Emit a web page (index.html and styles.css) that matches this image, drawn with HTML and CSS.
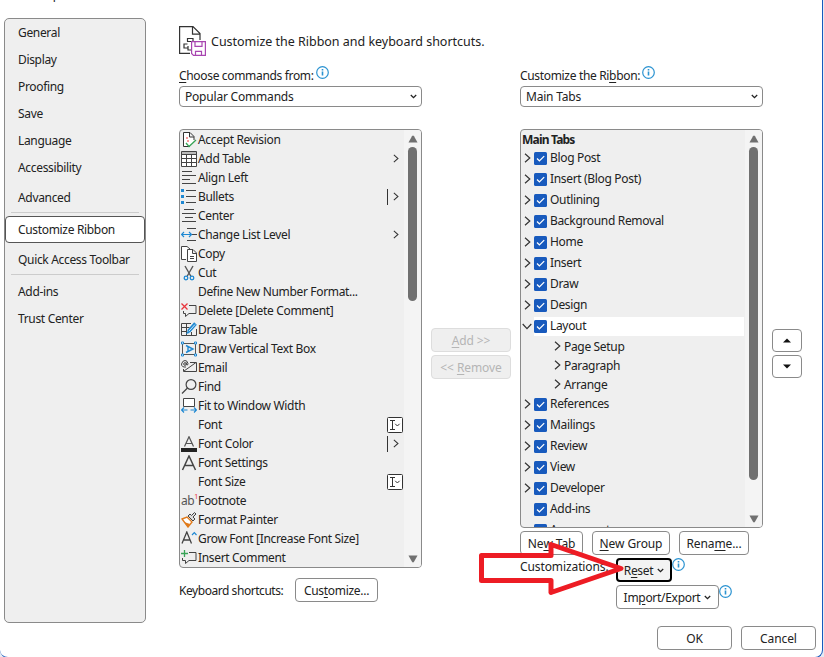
FILE: index.html
```html
<!DOCTYPE html>
<html lang="en">
<head>
  <meta charset="UTF-8">
  <meta name="viewport" content="width=device-width, initial-scale=1.0">
  <title>Options</title>
  <link rel="stylesheet" href="styles.css">
</head>
<body>
<!--SHARED ICONS-->
  <svg class="defs">
    <symbol id="check" viewBox="0 0 13 13"><rect width="13" height="13" rx="1.5" fill="#185abd"/><path d="M3 6.5l2.4 2.4 4.8-4.8" fill="none" stroke="#fff" stroke-width="1.3"/></symbol>
    <symbol id="right" viewBox="0 0 7 10"><path d="M1 .7l4.8 4.3L1 9.3" fill="none" stroke="#333" stroke-width="1.2"/></symbol>
    <symbol id="down" viewBox="0 0 10 7"><path d="M.7 1L5 5.6 9.3 1" fill="none" stroke="#333" stroke-width="1.2"/></symbol>
    <symbol id="caret" viewBox="0 0 7 5"><path d="M.8 1l2.7 2.6L6.2 1" fill="none" stroke="#222" stroke-width="1.3"/></symbol>
    <symbol id="info" viewBox="0 0 13 13"><circle cx="6.5" cy="6.5" r="5.8" fill="none" stroke="#2b93d1" stroke-width="1.2"/><path d="M6.5 3v1.4M6.5 5.4v4.2" stroke="#2b93d1" stroke-width="1.6"/></symbol>
    <symbol id="tri" viewBox="0 0 10 8"><path d="M.5 7.500L4 1.200q1-1.200 2 0l3.500 6.300z" fill="#707070"/></symbol>
    <symbol id="edit" viewBox="0 0 16 16"><rect x=".5" y=".5" width="15" height="15" rx="1" fill="#fff" stroke="#333"/><path d="M3 3.5h5M3 12.5h5M5.5 3.5v9M8.2 6.8l2.2 2.2 2.2-2.2" fill="none" stroke="#333"/></symbol>
  </svg>

  <div class="dialog">
    <span class="title">Word Options</span>
    <div class="content">
<!--SIDEBAR-->
      <nav class="sidebar">
        <a>General</a>
        <a>Display</a>
        <a>Proofing</a>
        <a>Save</a>
        <a>Language</a>
        <a>Accessibility</a>
        <a class="advanced">Advanced</a>
        <hr>
        <a class="active">Customize Ribbon</a>
        <a class="toolbar-link">Quick Access Toolbar</a>
        <hr class="second">
        <a class="addins">Add-ins</a>
        <a>Trust Center</a>
      </nav>

      <main class="main">
        <header class="header">
          <svg width="28" height="31" viewBox="0 0 28 31" fill="none" stroke="#333" stroke-width="1.2">
            <path d="M11 27.4H.6V.6H14l7 7V14M13.5.6v7.5H21" fill="#fff"/>
            <path d="M8.5 15.5v-3H14v3M8.500 18H5v4h4M8 15.500h4M9 20v4h3"/>
            <path d="M12.600 15.600h13.800v13.800H14.500l-1.900-1.900zM16 15.600v4.800h7v-4.800M16.500 29.400v-4h6v4" fill="#fff" stroke="#a846b0"/>
          </svg>
          <h1>Customize the Ribbon and keyboard shortcuts.</h1>
        </header>

        <div class="columns">
<!--COMMANDS-->
          <section class="column">
            <div class="label"><span><u>C</u>hoose commands from:</span><svg class="info"><use href="#info"/></svg></div>
            <div class="select">Popular Commands<svg class="caret"><use href="#caret"/></svg></div>
            <div class="list commands">
              <ul>
                <li><svg class="icon" viewBox="0 0 16 16"><path d="M9 14.500H2.500V.500H9l4 4V8M8.500.500V5H13" fill="#fff" stroke="#333"/><path d="M5 6h2M6 9h2" stroke="#e33"/><path d="M5 11l3 3.500L15 8" fill="none" stroke="#38a457" stroke-width="1.300"/></svg>Accept Revision</li>
                <li><svg class="icon" viewBox="0 0 16 16"><path d="M.500.500h15v15H.500z" fill="#fff"/><path d="M.500.500h15v3H.500z" fill="#bbb"/><path d="M.500.500h15v15H.500zM.500 3.500h15M.500 7.500h15M.500 11.500h15M5.500 3.500v12M10.500 3.500v12" fill="none" stroke="#444"/></svg>Add Table<svg class="more"><use href="#right"/></svg></li>
                <li><svg class="icon" viewBox="0 0 16 16"><path d="M1 1.500h10M1 5.500h14M1 9.500h8M1 13.500h14" stroke="#444"/></svg>Align Left</li>
                <li><svg class="icon" viewBox="0 0 16 16"><path d="M0 0h3v3H0zM0 6h3v3H0zM0 12h3v3H0z" fill="#1e88d2"/><path d="M5 1.500h10M5 7.500h10M5 13.500h10" stroke="#444"/></svg>Bullets<i></i><svg class="more"><use href="#right"/></svg></li>
                <li><svg class="icon" viewBox="0 0 16 16"><path d="M3 1.500h10M1 5.500h14M4 9.500h8M1 13.500h14" stroke="#444"/></svg>Center</li>
                <li><svg class="icon" viewBox="0 0 16 16"><path d="M6 1.500h9M11 7.500h5M6 13.500h9" stroke="#444"/><path d="M.500 7.500h10M3 5L.500 7.500 3 10M8 5l2.500 2.500L8 10" fill="none" stroke="#1e88d2" stroke-width="1.200"/></svg>Change List Level<svg class="more"><use href="#right"/></svg></li>
                <li><svg class="icon" viewBox="0 0 16 16" fill="#fff" stroke="#444"><path d="M5 13.500H.500V.500H6L9 3"/><path d="M6.500 3.500H12l3.500 3.500v8.500h-9zM11.500 3.500v4h4M9 10.500h4M9 12.500h4"/></svg>Copy</li>
                <li><svg class="icon" viewBox="0 0 16 16" fill="none"><path d="M4 1l6 10.500M12 1L6 11.500" stroke="#555" stroke-width="1.400"/><circle cx="5" cy="13" r="1.800" stroke="#1e88d2" stroke-width="1.300"/><circle cx="11" cy="13" r="1.800" stroke="#1e88d2" stroke-width="1.300"/></svg>Cut</li>
                <li><span class="icon"></span>Define New Number Format...</li>
                <li><svg class="icon" viewBox="0 0 16 16" fill="none"><path d="M8 2.500h7v8H8L4.500 13.500v-3H2.500V8" stroke="#444"/><path d="M.500.500l6 6M6.500.500l-6 6" stroke="#e8353c" stroke-width="1.300"/></svg>Delete [Delete Comment]</li>
                <li><svg class="icon" viewBox="0 0 16 16" fill="none"><path d="M10 1.500H.500v12h15V7M.500 5.500h8M.500 9.500h5M5.500 1.500v12M10.500 10v4" stroke="#444"/><path d="M14.500 1.500l-7 8" stroke="#1e88d2" stroke-width="3.500"/><path d="M14 2.500l-6 6.500" stroke="#d5ecfb"/><path d="M7 8.500l-2 3.500 3.500-1z" fill="#1e88d2"/></svg>Draw Table</li>
                <li><svg class="icon" viewBox="0 0 16 16" fill="none"><path d="M1.500 2.500h13v11h-13z" stroke="#555"/><path d="M5 4.500L12 8l-7 3.500M7 6v4" stroke="#1e88d2" stroke-width="1.400"/><path d="M.500 1h2v2h-2zM13.500 1h2v2h-2zM.500 13h2v2h-2zM13.500 13h2v2h-2z" fill="#fff" stroke="#1e88d2"/></svg>Draw Vertical Text Box</li>
                <li><svg class="icon" viewBox="0 0 16 16" fill="none" stroke="#444"><path d="M9 2.500h6.500v9H2.500V9M3 11l5-3.500 7-5"/><circle cx="4" cy="4" r="1.300"/><path d="M5.300 2.500v2.200q1.700 1 1.700-1Q6.500.500 4 .500T.500 4Q.500 7.500 5 7"/></svg>Email</li>
                <li><svg class="icon" viewBox="0 0 16 16" fill="none" stroke="#444" stroke-width="1.200"><circle cx="10" cy="5.500" r="4.900"/><path d="M6.500 9L1 14.500"/></svg>Find</li>
                <li><svg class="icon" viewBox="0 0 16 16"><path d="M2.500.500h11v8h-11z" fill="#fff" stroke="#444"/><path d="M.500 12h6M3 9.500L.500 12 3 14.500M9.500 12h6M13 9.500l2.500 2.500-2.500 2.500" fill="none" stroke="#1e88d2" stroke-width="1.200"/></svg>Fit to Window Width</li>
                <li><span class="icon"></span>Font<svg class="edit"><use href="#edit"/></svg></li>
                <li><svg class="icon" viewBox="0 0 16 16"><path d="M3.500 10.500L8 .700l4.500 9.800M5 7.500h6" fill="none" stroke="#555" stroke-width="1.200"/><path d="M0 12h16v4H0z" fill="#222"/></svg>Font Color<i></i><svg class="more"><use href="#right"/></svg></li>
                <li><svg class="icon" viewBox="0 0 16 16"><path d="M1.500 15L8 1l6.500 14M4 10.500h8" fill="none" stroke="#444" stroke-width="1.500"/></svg>Font Settings</li>
                <li><span class="icon"></span>Font Size<svg class="edit"><use href="#edit"/></svg></li>
                <li><span class="icon footnote">ab<sup>1</sup></span>Footnote</li>
                <li><svg class="icon" viewBox="0 0 16 16"><path d="M1 7l5-2 5 5-4 5z" fill="#fff" stroke="#e07a1a" stroke-width="1.400"/><path d="M3 10l6 2-2 3z" fill="#e07a1a"/><path d="M7 4l5 5 2-2-2-2 3-3-1.500-1.500-3 3L9 2z" fill="#ddd" stroke="#444"/></svg>Format Painter</li>
                <li><svg class="icon" viewBox="0 0 16 16" fill="none"><path d="M1 12.500L5.800 1 10.500 12.500M2.500 9H9" stroke="#444" stroke-width="1.300"/><path d="M11 4l2.300-2.300L15.500 4" stroke="#1e88d2" stroke-width="1.200"/></svg>Grow Font [Increase Font Size]</li>
                <li><svg class="icon" viewBox="0 0 16 16" fill="none"><path d="M8 2.500h7v8H8L4.500 13.500v-3H1.500V8" stroke="#444"/><path d="M3.500 0v7M0 3.500h7" stroke="#38a457" stroke-width="1.300"/></svg>Insert Comment</li>
              </ul>
              <div class="scroll"><svg><use href="#tri"/></svg><b class="thumb short"></b><svg class="flip"><use href="#tri"/></svg></div>
            </div>
            <div class="keyboard">
              <span>Keyboard shortcuts:</span>
              <button>Cus<u>t</u>omize...</button>
            </div>
          </section>

          <div class="transfer">
            <button disabled><u>A</u>dd &gt;&gt;</button>
            <button disabled>&lt;&lt; <u>R</u>emove</button>
          </div>

<!--RIBBON TABS-->
          <section class="column">
            <div class="label"><span>Customize the Ri<u>b</u>bon:</span><svg class="info"><use href="#info"/></svg></div>
            <div class="select">Main Tabs<svg class="caret"><use href="#caret"/></svg></div>
            <div class="list tabs">
              <ul>
                <li class="heading">Main Tabs</li>
                <li><svg class="arrow"><use href="#right"/></svg><svg class="check"><use href="#check"/></svg><span>Blog Post</span></li>
                <li><svg class="arrow"><use href="#right"/></svg><svg class="check"><use href="#check"/></svg><span>Insert (Blog Post)</span></li>
                <li><svg class="arrow"><use href="#right"/></svg><svg class="check"><use href="#check"/></svg><span>Outlining</span></li>
                <li><svg class="arrow"><use href="#right"/></svg><svg class="check"><use href="#check"/></svg><span>Background Removal</span></li>
                <li><svg class="arrow"><use href="#right"/></svg><svg class="check"><use href="#check"/></svg><span>Home</span></li>
                <li><svg class="arrow"><use href="#right"/></svg><svg class="check"><use href="#check"/></svg><span>Insert</span></li>
                <li><svg class="arrow"><use href="#right"/></svg><svg class="check"><use href="#check"/></svg><span>Draw</span></li>
                <li><svg class="arrow"><use href="#right"/></svg><svg class="check"><use href="#check"/></svg><span>Design</span></li>
                <li class="selected"><svg class="arrow open"><use href="#down"/></svg><svg class="check"><use href="#check"/></svg><span>Layout</span></li>
                <li class="child"><svg class="arrow"><use href="#right"/></svg>Page Setup</li>
                <li class="child"><svg class="arrow"><use href="#right"/></svg>Paragraph</li>
                <li class="child"><svg class="arrow"><use href="#right"/></svg>Arrange</li>
                <li><svg class="arrow"><use href="#right"/></svg><svg class="check"><use href="#check"/></svg><span>References</span></li>
                <li><svg class="arrow"><use href="#right"/></svg><svg class="check"><use href="#check"/></svg><span>Mailings</span></li>
                <li><svg class="arrow"><use href="#right"/></svg><svg class="check"><use href="#check"/></svg><span>Review</span></li>
                <li><svg class="arrow"><use href="#right"/></svg><svg class="check"><use href="#check"/></svg><span>View</span></li>
                <li><svg class="arrow"><use href="#right"/></svg><svg class="check"><use href="#check"/></svg><span>Developer</span></li>
                <li><svg class="arrow"></svg><svg class="check"><use href="#check"/></svg><span>Add-ins</span></li>
                <li><svg class="arrow"></svg><svg class="check"><use href="#check"/></svg><span>Agreement</span></li>
              </ul>
              <div class="scroll"><svg><use href="#tri"/></svg><b class="thumb tall"></b><svg class="flip"><use href="#tri"/></svg></div>
            </div>
            <div class="tab-buttons">
              <button class="new-tab">Ne<u>w</u> Tab</button>
              <button class="new-group"><u>N</u>ew Group</button>
              <button class="rename">Rena<u>m</u>e...</button>
            </div>
            <div class="custom">
              <span>Customizations:</span>
              <div class="custom-buttons">
                <div><button class="reset">R<u>e</u>set<svg class="caret"><use href="#caret"/></svg></button><svg class="info"><use href="#info"/></svg></div>
                <div><button class="import">Im<u>p</u>ort/Export<svg class="caret"><use href="#caret"/></svg></button><svg class="info"><use href="#info"/></svg></div>
              </div>
            </div>
          </section>

          <div class="order">
            <button><svg width="8" height="5"><path d="M0 4.500L4 .500l4 4z" fill="#111"/></svg></button>
            <button><svg width="8" height="5"><path d="M0 .500h8l-4 4z" fill="#111"/></svg></button>
          </div>
        </div>
      </main>
    </div>

    <footer class="footer">
      <button>OK</button>
      <button>Cancel</button>
    </footer>
  </div>

<!--RED ARROW-->
  <svg class="pointer" width="148" height="60" viewBox="0 0 148 60">
    <path d="M3.500 16.500H73V5.500L143 29.500 73 53.500V41.500H3.500z" fill="none" stroke="#ed1c24" stroke-width="5" stroke-linejoin="round"/>
  </svg>
</body>
</html>
```

FILE: styles.css
```css
* {
  box-sizing: border-box;
}
body {
  margin: 0;
  width: 824px;
  height: 657px;
  overflow: hidden;
  position: relative;
  background-color: #e6ebf3;
  font-family: "Noto Sans", "Open Sans", sans-serif;
  font-size: 12px;
  line-height: 16px;
  letter-spacing: -0.33px;
  color: #222;
}
svg {
  display: block;
  flex-shrink: 0;
}
u {
  text-underline-offset: 2px;
}
.defs {
  position: absolute;
  width: 0;
  height: 0;
}
.dialog {
  width: 823px;
  height: 658px;
  border-right: 1px solid #185abd;
  border-bottom: 1px solid #185abd;
  border-radius: 0 0 8px 8px;
  background-color: white;
  position: relative;
}
.title {
  position: absolute;
  left: 12px;
  top: -13px;
}
.content {
  display: flex;
  padding: 18px 0 0 4px;
  height: 626px;
}
button {
  height: 24px;
  padding: 1px 0 0;
  display: flex;
  align-items: center;
  justify-content: center;
  white-space: pre;
  font: inherit;
  letter-spacing: -0.1px;
  color: #222;
  background-color: white;
  border: 1px solid #8a8a8a;
  border-radius: 4px;
}
/* sidebar */
.sidebar {
  width: 142px;
  height: 605px;
  border: 1px solid #8a8a8a;
  border-radius: 5px;
  background-color: #efefef;
  display: flex;
  flex-direction: column;
}
.sidebar a {
  height: 27px;
  line-height: 28px;
  padding-left: 13px;
}
.sidebar .advanced {
  margin: 3px 0 1px;
}
.sidebar hr {
  width: 128px;
  margin: 0 0 3px 6px;
  border: 0;
  border-top: 1px solid #ccc;
}
.sidebar .active {
  width: 140px;
  background-color: white;
  border: 1px solid #555;
  border-radius: 4px;
  line-height: 26px;
  padding-left: 12px;
}
.sidebar .toolbar-link {
  margin-top: 3px;
}
.sidebar .second {
  margin: 1px 0 3px 6px;
}
/* main */
.main {
  padding: 7px 0 0 33px;
}
.header {
  display: flex;
  align-items: center;
  gap: 4px;
  height: 33px;
}
h1 {
  margin: 0;
  font-size: 12.5px;
  font-weight: normal;
  letter-spacing: -0.02px;
}
.columns {
  display: flex;
  padding-top: 8px;
}
.column {
  width: 243px;
}
.label {
  display: flex;
  height: 20px;
}
.label span {
  padding-top: 2px;
}
.info {
  width: 13px;
  height: 13px;
  margin: 0 0 0 2px;
}
.select {
  height: 21px;
  display: flex;
  align-items: center;
  justify-content: space-between;
  padding: 0 4px 0 5px;
  border: 1px solid #8a8a8a;
  border-radius: 4px;
  letter-spacing: -0.2px;
}
.caret {
  width: 7px;
  height: 5px;
}
.list {
  display: flex;
  margin-top: 22px;
  overflow: hidden;
  border: 1px solid #8a8a8a;
  border-radius: 4px;
  background-color: #efefef;
}
.list ul {
  flex: 1;
  margin: 0;
  padding: 0;
  list-style: none;
}
.list li {
  display: flex;
  align-items: center;
  white-space: nowrap;
}
.commands {
  height: 439px;
}
.commands li {
  height: 19px;
  padding: 0 1px;
  gap: 1px;
}
.icon {
  width: 16px;
  height: 16px;
}
.more {
  width: 6px;
  height: 9px;
  margin: 0 4px 0 auto;
}
.commands i {
  width: 1px;
  height: 16px;
  margin-left: auto;
  background-color: #333;
}
.commands i + .more {
  margin-left: 4px;
}
.edit {
  width: 16px;
  height: 16px;
  margin-left: auto;
}
.footnote {
  display: flex;
  color: #555;
  letter-spacing: -0.5px;
}
.footnote sup {
  font-size: 7px;
  line-height: 8px;
  color: #e8353c;
}
.scroll {
  width: 17px;
  padding: 5px 3px 4px 4px;
  display: flex;
  flex-direction: column;
  background-color: #f4f4f4;
}
.scroll svg {
  width: 10px;
  height: 8px;
}
.scroll .flip {
  margin-top: auto;
  transform: rotate(180deg);
}
.thumb {
  width: 9px;
  margin-top: 4px;
  border-radius: 5px;
  background-color: #707070;
}
.short {
  height: 154px;
}
.tall {
  height: 333px;
}
.keyboard {
  display: flex;
  align-items: center;
  justify-content: space-between;
  margin-top: 10px;
}
.keyboard > span {
  padding-top: 1px;
  white-space: nowrap;
  letter-spacing: -0.7px;
  letter-spacing: -0.45px;
}
.keyboard button {
  width: 83px;
  margin-right: 44px;
  letter-spacing: -0.3px;
}
.transfer {
  width: 80px;
  margin: 262px 9px 0;
}
.transfer button {
  width: 80px;
  margin-bottom: 3px;
  color: #b5b5b5;
  background-color: #efefef;
  border-color: #ddd;
}
/* ribbon tabs */
.tabs {
  height: 399px;
}
.tabs li {
  height: 21px;
}
.tabs .heading {
  height: 18px;
  padding: 2px 0 0 1px;
  font-weight: bold;
  letter-spacing: -0.8px;
}
.arrow {
  width: 7px;
  height: 10px;
  margin: 0 3px 1px;
}
.open {
  width: 10px;
  height: 7px;
  margin: 0 2px 0 1px;
}
.check {
  width: 13px;
  height: 13px;
}
.tabs li span {
  flex: 1;
  height: 19px;
  line-height: 18px;
  padding-left: 3px;
}
.tabs .selected {
  background: linear-gradient(white, white) 13px 1px / 210px 19px no-repeat;
}
.tabs .child {
  height: 19px;
  padding-left: 30px;
}
.tab-buttons {
  display: flex;
  padding-top: 3px;
}
.new-tab {
  width: 63px;
}
.new-group {
  width: 78px;
  margin: 0 9px;
}
.rename {
  width: 70px;
}
.custom {
  display: flex;
  padding-top: 3px;
}
.custom > span {
  width: 96px;
  padding-top: 1px;
  letter-spacing: -0.1px;
}
.custom-buttons > div {
  display: flex;
  margin-bottom: 3px;
}
.custom-buttons button {
  letter-spacing: -0.3px;
}
.custom-buttons .caret {
  margin-left: 4px;
}
.custom-buttons .info {
  margin: 0;
}
.reset {
  width: 56px;
  border: 2px solid black;
  background-color: #f3f3f3;
}
.import {
  width: 103px;
}
.order {
  margin: 263px 0 0 9px;
}
.order button {
  width: 30px;
  height: 23px;
  padding: 0;
  margin-bottom: 3px;
}
.footer {
  display: flex;
  justify-content: flex-end;
  gap: 9px;
  padding-right: 6px;
}
.footer button {
  width: 75px;
}
.pointer {
  position: absolute;
  left: 478px;
  top: 539px;
}
```
